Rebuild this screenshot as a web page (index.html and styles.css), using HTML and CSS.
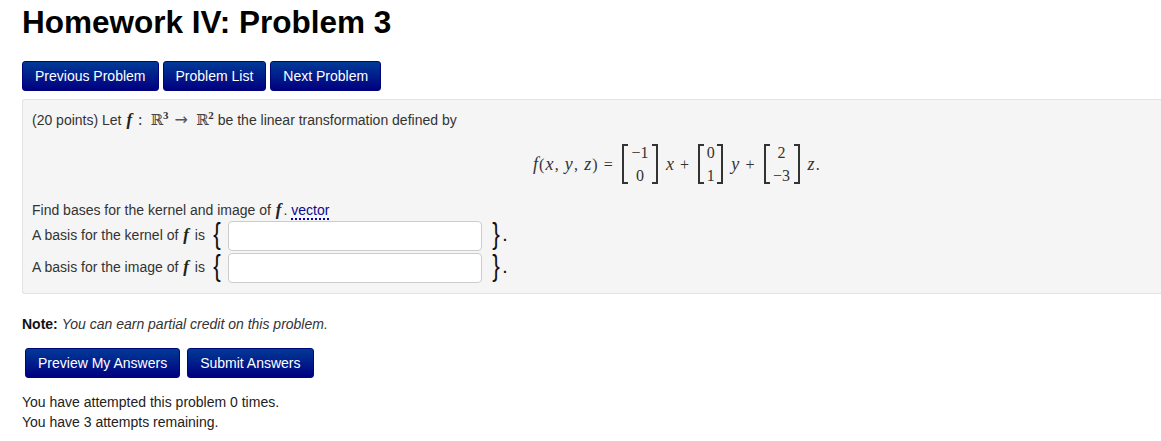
FILE: index.html
```html
<!DOCTYPE html>
<html lang="en">
<head>
  <meta charset="UTF-8">
  <title>Homework IV: Problem 3</title>
  <link rel="stylesheet" href="styles.css">
</head>
<body>
  <h1 class="page_title">Homework IV: Problem 3</h1>

  <div class="nav_row">
    <a class="btn" href="#">Previous Problem</a>
    <a class="btn" href="#">Problem List</a>
    <a class="btn" href="#">Next Problem</a>
  </div>

  <div class="problem">
    <p class="intro">(20 points) Let <i class="m_f">f</i><span class="m_colon">:</span><span class="m_bb">ℝ</span><sup class="m_sup">3</sup><span class="m_arrow">→</span><span class="m_bb">ℝ</span><sup class="m_sup">2</sup> be the linear transformation defined by</p>

    <div class="formula">
      <span class="m_text"><i>f</i>(<i>x</i>, <i>y</i>, <i>z</i>) =</span>
      <div class="matrix"><span>−1</span><span>0</span></div>
      <span class="m_text"><i>x</i> +</span>
      <div class="matrix matrix_small"><span>0</span><span>1</span></div>
      <span class="m_text"><i>y</i> +</span>
      <div class="matrix"><span>2</span><span>−3</span></div>
      <span class="m_text"><i>z</i>.</span>
    </div>

    <p class="find">Find bases for the kernel and image of <i class="m_f">f</i>. <a class="hint" href="#">vector</a></p>

    <div class="answer_row">
      <span class="answer_label">A basis for the kernel of <i class="m_f">f</i> is</span>
      <span class="brace">{</span>
      <input class="answer" type="text">
      <span class="brace">}</span>
      <span class="brace_dot">.</span>
    </div>
    <div class="answer_row">
      <span class="answer_label">A basis for the image of <i class="m_f">f</i> is</span>
      <span class="brace">{</span>
      <input class="answer" type="text">
      <span class="brace">}</span>
      <span class="brace_dot">.</span>
    </div>
  </div>

  <p class="note"><b>Note:</b> <i>You can earn partial credit on this problem.</i></p>

  <div class="submit_row">
    <a class="btn" href="#">Preview My Answers</a>
    <a class="btn" href="#">Submit Answers</a>
  </div>

  <p class="attempts">You have attempted this problem 0 times.<br>You have 3 attempts remaining.</p>
</body>
</html>
```

FILE: styles.css
```css
html, body {
  overflow: hidden;
}
body {
  margin: 0;
  height: 441px;
  padding: 0 0 0 22px;
  box-sizing: border-box;
  font-family: "Liberation Sans", Arial, sans-serif;
  font-size: 14px;
  line-height: 20px;
  color: #333;
  background-color: #fff;
}
p {
  margin: 0;
}
.page_title {
  margin: 0;
  padding-top: 2px;
  font-size: 31.5px;
  line-height: 40px;
  font-weight: bold;
  color: #000;
}
.nav_row {
  display: flex;
  gap: 4px;
  margin-top: 19px;
}
.btn {
  display: block;
  box-sizing: border-box;
  height: 30px;
  padding: 0 12px;
  line-height: 28px;
  color: #fff;
  font-size: 14px;
  text-decoration: none;
  border: 1px solid #00057a;
  border-radius: 3px;
  background: linear-gradient(to bottom, #003a96, #000080);
}
.problem {
  box-sizing: border-box;
  height: 195px;
  margin-top: 8px;
  padding: 10px 9px;
  background-color: #f5f5f5;
  border: 1px solid #e3e3e3;
  border-right: 0;
  border-radius: 3px 0 0 3px;
}
.intro {
  height: 20px;
  white-space: nowrap;
}
.m_f {
  font-family: "Liberation Serif", serif;
  font-size: 17px;
  font-weight: bold;
  color: #222;
  margin: 0 2px 0 1px;
}
.m_colon {
  font-family: "Liberation Serif", serif;
  font-size: 16px;
  margin: 0 8px 0 4px;
}
.m_bb {
  font-family: "DejaVu Serif", serif;
  font-size: 15px;
  color: #444;
}
.m_sup {
  font-family: "Liberation Serif", serif;
  font-size: 11px;
  font-weight: bold;
  line-height: 0;
}
.m_arrow {
  font-family: "DejaVu Sans", sans-serif;
  font-size: 16px;
  color: #555;
  margin: 0 8px 0 6px;
}
.formula {
  display: flex;
  align-items: center;
  gap: 8px;
  height: 50px;
  margin-top: 9px;
  margin-left: 501px;
  font-family: "Liberation Serif", serif;
  font-size: 16px;
  color: #333;
  white-space: nowrap;
}
.m_text {
  letter-spacing: 1.1px;
}
.m_text i {
  font-size: 18px;
}
.matrix {
  display: flex;
  flex-direction: column;
  align-items: center;
  justify-content: space-between;
  box-sizing: border-box;
  width: 36px;
  height: 40px;
  line-height: 17px;
  font-size: 16px;
  border-left: 2px solid #333;
  border-right: 2px solid #333;
  background:
    linear-gradient(#333, #333) left top / 4px 2px no-repeat,
    linear-gradient(#333, #333) left bottom / 4px 2px no-repeat,
    linear-gradient(#333, #333) right top / 4px 2px no-repeat,
    linear-gradient(#333, #333) right bottom / 4px 2px no-repeat;
}
.matrix_small {
  width: 25px;
}
.find {
  height: 20px;
  margin-top: 11px;
  white-space: nowrap;
}
.hint {
  color: #0a0a8c;
  text-decoration: none;
  border-bottom: 2px dotted #0000aa;
}
.answer_row {
  display: flex;
  align-items: center;
  height: 32px;
  white-space: nowrap;
}
.answer_label {
  width: 180px;
  margin-top: -2px;
}
.brace {
  width: 10px;
  font-family: "Liberation Sans", sans-serif;
  font-size: 30px;
  line-height: 30px;
  text-align: center;
  color: #111;
  margin-top: -4px;
  transform: scaleX(0.75);
}
.brace_dot {
  margin: 0 0 0 2px;
  font-weight: bold;
  color: #111;
}
.answer {
  box-sizing: border-box;
  width: 254px;
  height: 30px;
  margin: 0 9px 0 6px;
  background-color: #fff;
  border: 1px solid #ccc;
  border-radius: 4px;
}
.note {
  margin-top: 20px;
  font-size: 14px;
  color: #333;
}
.note b {
  color: #111;
}
.submit_row {
  display: flex;
  gap: 7px;
  margin-top: 14px;
  margin-left: 3px;
}
.attempts {
  margin-top: 14px;
  color: #222;
}
```
